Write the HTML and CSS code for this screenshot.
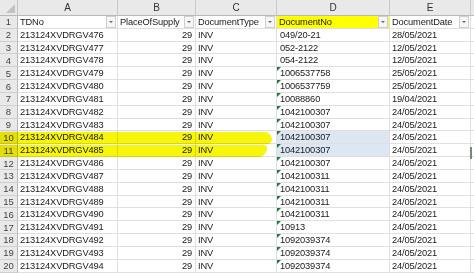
FILE: index.html
```html
<!DOCTYPE html>
<html lang="en">
<head>
    <meta charset="UTF-8">
    <title>TDS Sheet</title>
    <link rel="stylesheet" href="styles.css">
</head>
<body>
    <div class="sheet" id="sheet">
        <div class="corner"><span class="corner-tri"></span></div>
        <div class="colhead">A</div>
        <div class="colhead">B</div>
        <div class="colhead">C</div>
        <div class="colhead">D</div>
        <div class="colhead">E</div>
        <div class="colhead last"></div>

        <div class="marker marker-10"></div>
        <div class="marker marker-11"></div>
        <div class="sel-edge"></div>
    </div>
    <script>
        const sheet = document.getElementById('sheet');
        const docs = [
            ['049/20-21', '28/05/2021', false],
            ['052-2122', '12/05/2021', false],
            ['054-2122', '12/05/2021', false],
            ['1006537758', '25/05/2021', true],
            ['1006537759', '25/05/2021', true],
            ['10088860', '19/04/2021', true],
            ['1042100307', '24/05/2021', true],
            ['1042100307', '24/05/2021', true],
            ['1042100307', '24/05/2021', true],
            ['1042100307', '24/05/2021', true],
            ['1042100307', '24/05/2021', true],
            ['1042100311', '24/05/2021', true],
            ['1042100311', '24/05/2021', true],
            ['1042100311', '24/05/2021', true],
            ['1042100311', '24/05/2021', true],
            ['10913', '24/05/2021', true],
            ['1092039374', '24/05/2021', true],
            ['1092039374', '24/05/2021', true],
            ['1092039374', '24/05/2021', true]
        ];
        function cell(text, cls) {
            const div = document.createElement('div');
            div.className = 'cell' + (cls ? ' ' + cls : '');
            if (text !== undefined) div.textContent = text;
            sheet.insertBefore(div, sheet.querySelector('.marker'));
            return div;
        }
        function filterCell(text, cls) {
            const div = cell(text, 'filter-cell' + (cls ? ' ' + cls : ''));
            const btn = document.createElement('span');
            btn.className = 'filter';
            div.appendChild(btn);
        }
        cell('1', 'rowhead');
        filterCell('TDNo');
        filterCell('PlaceOfSupply');
        filterCell('DocumentType');
        filterCell('DocumentNo', 'yellow');
        filterCell('DocumentDate');
        cell('', 'extra');
        docs.forEach((d, i) => {
            const row = i + 2;
            cell(String(row), 'rowhead');
            cell('213124XVDRGV' + (476 + i));
            cell('29', 'num');
            cell('INV');
            const no = cell(d[0], 'docno' + ((row === 10 || row === 11) ? ' selected' : ''));
            if (d[2]) {
                const tri = document.createElement('span');
                tri.className = 'tri';
                no.appendChild(tri);
            }
            cell(d[1]);
            cell('', 'extra');
        });
    </script>
</body>
</html>
```
FILE: styles.css
```css
body {
    margin: 0;
    background-color: #fff;
    overflow: hidden;
    font-family: "Liberation Sans", Arial, sans-serif;
}
.sheet {
    position: relative;
    display: grid;
    grid-template-columns: 18px 100px 78px 81px 113px 81px 1fr;
    grid-template-rows: 16px;
    grid-auto-rows: 12.84px;
    width: 474px;
    height: 273px;
    overflow: hidden;
}
.corner {
    position: relative;
    background-color: #e9e9e9;
    border-right: 1px solid #c4c4c4;
    border-bottom: 1px solid #b8b8b8;
}
.corner-tri {
    position: absolute;
    right: 2px;
    bottom: 2px;
    border-left: 9px solid transparent;
    border-bottom: 9px solid #c2c2c2;
}
.colhead {
    background-color: #e9e9e9;
    border-right: 1px solid #c9c9c9;
    border-bottom: 1px solid #b8b8b8;
    color: #333;
    font-size: 10px;
    display: flex;
    align-items: center;
    justify-content: center;
}
.colhead.last { border-right: none; }
.cell {
    position: relative;
    display: flex;
    align-items: center;
    padding: 0 2px;
    font-size: 9.3px;
    letter-spacing: -0.15px;
    color: #1a1a1a;
    white-space: nowrap;
    overflow: hidden;
    border-right: 1px solid #dfdfdf;
    border-bottom: 1px solid #dfdfdf;
    box-sizing: border-box;
}
.rowhead {
    justify-content: center;
    padding: 0;
    background-color: #e9e9e9;
    color: #444;
    font-size: 9.5px;
    letter-spacing: 0;
    border-right: 1px solid #b8b8b8;
    border-bottom: 1px solid #cfcfcf;
}
.num { justify-content: flex-end; padding-right: 3px; }
.docno { padding-left: 3px; }
.extra { border-right: none; }
.filter-cell { justify-content: space-between; padding-right: 1px; }
.yellow { background-color: #ffff00; }
.selected { background-color: #dce7f3; }
.filter {
    position: relative;
    width: 8px;
    height: 10px;
    border: 1px solid #cfcfcf;
    background-color: #f6f6f6;
    flex: none;
}
.filter::after {
    content: "";
    position: absolute;
    left: 2px;
    top: 4px;
    border-left: 2px solid transparent;
    border-right: 2px solid transparent;
    border-top: 2px solid #666;
}
.tri {
    position: absolute;
    left: 0;
    top: 0;
    border-top: 4px solid #1f7a3e;
    border-right: 4px solid transparent;
}
.marker {
    position: absolute;
    left: 0;
    background-color: #f8f500;
    mix-blend-mode: multiply;
    opacity: 0.95;
    border-radius: 0 10px 6px 0;
}
.marker-10 { top: 132px; height: 12px; width: 272px; }
.marker-11 { top: 145px; height: 12px; width: 267px; border-radius: 0 4px 10px 0; }
.sel-edge {
    position: absolute;
    left: 470px;
    top: 147px;
    width: 2px;
    height: 12px;
    background-color: #6d8f78;
}
```
